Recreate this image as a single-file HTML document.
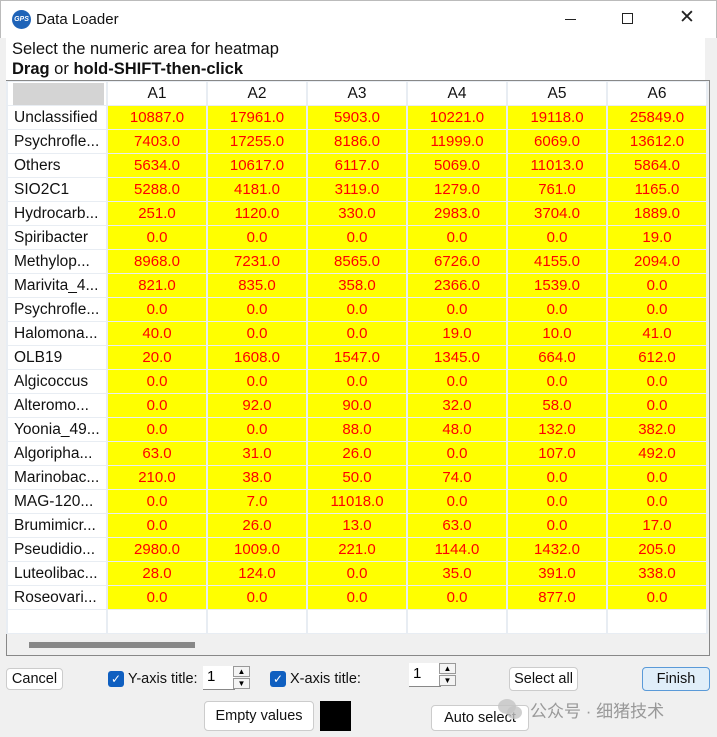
<!DOCTYPE html><html><head><style>
*{margin:0;padding:0;box-sizing:border-box}
body{width:717px;height:737px;background:#f0f0f0;font-family:"Liberation Sans",sans-serif;position:relative;overflow:hidden}
.abs{position:absolute}
.title{left:0;top:0;width:717px;height:38px;background:#fff;border:1px solid #bbb;border-bottom:none}
.hdr{left:6px;top:38px;width:699px;height:43px;background:#fff;font-size:16.5px;padding:1px 6px;line-height:20px;color:#111}
.tbl{left:6px;top:80px;width:704px;height:576px;border:1px solid #888;background:#f0f0f0}
table{border-collapse:separate;border-spacing:2px 1px;background:#e8edf3;position:absolute;left:-1px;top:0}
td{height:23px;font-size:15px;text-align:center;color:#f00;background:#ff0;width:98px;padding:0}
td.n{background:#fff;color:#111;text-align:left;padding-left:6px;width:98px;white-space:nowrap;font-size:15.5px}
tr.h td{background:#fff;color:#111;font-size:15.5px}
tr.e td{background:#fff}
.btn{background:#fff;border:1px solid #ccc;border-radius:4px;font-size:14.5px;color:#111;text-align:center}
.cb{width:16px;height:16px;background:#0f5fc0;border-radius:3px;color:#fff;font-size:12px;text-align:center;line-height:16px}
.lbl{font-size:14.5px;color:#111}
.spin{background:#fff;border-bottom:1px solid #888;font-size:15px;padding-left:4px;line-height:22px}
.arr{border:1px solid #999;background:#f4f4f4;font-size:8px;text-align:center;line-height:9px;width:17px;height:11px}
</style></head><body>
<div class="abs title">
<div class="abs" style="left:11px;top:9px;width:19px;height:19px;border-radius:50%;background:#1e63b8;color:#fff;font-size:7px;font-style:italic;font-weight:bold;line-height:19px;text-align:center">GPS</div>
<div class="abs" style="left:35px;top:10px;font-size:15px;color:#111">Data Loader</div>
<div class="abs" style="left:564px;top:18px;width:11px;height:1px;background:#222"></div>
<div class="abs" style="left:621px;top:12px;width:11px;height:11px;border:1px solid #222"></div>
<div class="abs" style="left:678px;top:5px;font-size:19px;color:#222">✕</div>
</div>
<div class="abs hdr">Select the numeric area for heatmap<br><b>Drag</b> or <b>hold-SHIFT-then-click</b></div>
<div class="abs tbl">
<table>
<tr class="h"><td class="n" style="padding:0"><div style="background:#d4d4d4;height:22px;margin:0 2px 0 5px"></div></td><td>A1</td><td>A2</td><td>A3</td><td>A4</td><td>A5</td><td>A6</td></tr>
<tr><td class="n">Unclassified</td><td>10887.0</td><td>17961.0</td><td>5903.0</td><td>10221.0</td><td>19118.0</td><td>25849.0</td></tr>
<tr><td class="n">Psychrofle...</td><td>7403.0</td><td>17255.0</td><td>8186.0</td><td>11999.0</td><td>6069.0</td><td>13612.0</td></tr>
<tr><td class="n">Others</td><td>5634.0</td><td>10617.0</td><td>6117.0</td><td>5069.0</td><td>11013.0</td><td>5864.0</td></tr>
<tr><td class="n">SIO2C1</td><td>5288.0</td><td>4181.0</td><td>3119.0</td><td>1279.0</td><td>761.0</td><td>1165.0</td></tr>
<tr><td class="n">Hydrocarb...</td><td>251.0</td><td>1120.0</td><td>330.0</td><td>2983.0</td><td>3704.0</td><td>1889.0</td></tr>
<tr><td class="n">Spiribacter</td><td>0.0</td><td>0.0</td><td>0.0</td><td>0.0</td><td>0.0</td><td>19.0</td></tr>
<tr><td class="n">Methylop...</td><td>8968.0</td><td>7231.0</td><td>8565.0</td><td>6726.0</td><td>4155.0</td><td>2094.0</td></tr>
<tr><td class="n">Marivita_4...</td><td>821.0</td><td>835.0</td><td>358.0</td><td>2366.0</td><td>1539.0</td><td>0.0</td></tr>
<tr><td class="n">Psychrofle...</td><td>0.0</td><td>0.0</td><td>0.0</td><td>0.0</td><td>0.0</td><td>0.0</td></tr>
<tr><td class="n">Halomona...</td><td>40.0</td><td>0.0</td><td>0.0</td><td>19.0</td><td>10.0</td><td>41.0</td></tr>
<tr><td class="n">OLB19</td><td>20.0</td><td>1608.0</td><td>1547.0</td><td>1345.0</td><td>664.0</td><td>612.0</td></tr>
<tr><td class="n">Algicoccus</td><td>0.0</td><td>0.0</td><td>0.0</td><td>0.0</td><td>0.0</td><td>0.0</td></tr>
<tr><td class="n">Alteromo...</td><td>0.0</td><td>92.0</td><td>90.0</td><td>32.0</td><td>58.0</td><td>0.0</td></tr>
<tr><td class="n">Yoonia_49...</td><td>0.0</td><td>0.0</td><td>88.0</td><td>48.0</td><td>132.0</td><td>382.0</td></tr>
<tr><td class="n">Algoripha...</td><td>63.0</td><td>31.0</td><td>26.0</td><td>0.0</td><td>107.0</td><td>492.0</td></tr>
<tr><td class="n">Marinobac...</td><td>210.0</td><td>38.0</td><td>50.0</td><td>74.0</td><td>0.0</td><td>0.0</td></tr>
<tr><td class="n">MAG-120...</td><td>0.0</td><td>7.0</td><td>11018.0</td><td>0.0</td><td>0.0</td><td>0.0</td></tr>
<tr><td class="n">Brumimicr...</td><td>0.0</td><td>26.0</td><td>13.0</td><td>63.0</td><td>0.0</td><td>17.0</td></tr>
<tr><td class="n">Pseudidio...</td><td>2980.0</td><td>1009.0</td><td>221.0</td><td>1144.0</td><td>1432.0</td><td>205.0</td></tr>
<tr><td class="n">Luteolibac...</td><td>28.0</td><td>124.0</td><td>0.0</td><td>35.0</td><td>391.0</td><td>338.0</td></tr>
<tr><td class="n">Roseovari...</td><td>0.0</td><td>0.0</td><td>0.0</td><td>0.0</td><td>877.0</td><td>0.0</td></tr>
<tr class="e"><td class="n"></td><td></td><td></td><td></td><td></td><td></td><td></td></tr>
</table>
<div class="abs" style="left:22px;top:561px;width:166px;height:6px;background:#888"></div>
</div>
<div class="abs btn" style="left:6px;top:668px;width:57px;height:22px;line-height:20px">Cancel</div>
<div class="abs cb" style="left:108px;top:671px">✓</div>
<div class="abs lbl" style="left:128px;top:671px">Y-axis title:</div>
<div class="abs spin" style="left:203px;top:666px;width:32px;height:24px">1</div>
<div class="abs arr" style="left:233px;top:666px">▲</div><div class="abs arr" style="left:233px;top:678px">▼</div>
<div class="abs cb" style="left:270px;top:671px">✓</div>
<div class="abs lbl" style="left:290px;top:671px">X-axis title:</div>
<div class="abs spin" style="left:409px;top:663px;width:32px;height:24px">1</div>
<div class="abs arr" style="left:439px;top:663px">▲</div><div class="abs arr" style="left:439px;top:675px">▼</div>
<div class="abs btn" style="left:509px;top:667px;width:69px;height:24px;line-height:22px">Select all</div>
<div class="abs btn" style="left:642px;top:667px;width:68px;height:24px;line-height:22px;background:#e0eef9;border-color:#5a9ad8">Finish</div>
<div class="abs btn" style="left:204px;top:701px;width:110px;height:30px;line-height:28px">Empty values</div>
<div class="abs" style="left:320px;top:701px;width:31px;height:30px;background:#000"></div>
<div class="abs btn" style="left:431px;top:705px;width:98px;height:26px;line-height:24px">Auto select</div>
<div class="abs" style="left:498px;top:699px;width:18px;height:15px;border-radius:50%;background:#c4c4c4;opacity:.8"></div>
<div class="abs" style="left:507px;top:706px;width:15px;height:13px;border-radius:50%;background:#c4c4c4;opacity:.8"></div>
<div class="abs" style="left:530px;top:697px;font-size:17px;color:#999;font-family:'Liberation Sans','Noto Sans CJK SC',sans-serif">公众号 · 细猪技术</div>
</body></html>
